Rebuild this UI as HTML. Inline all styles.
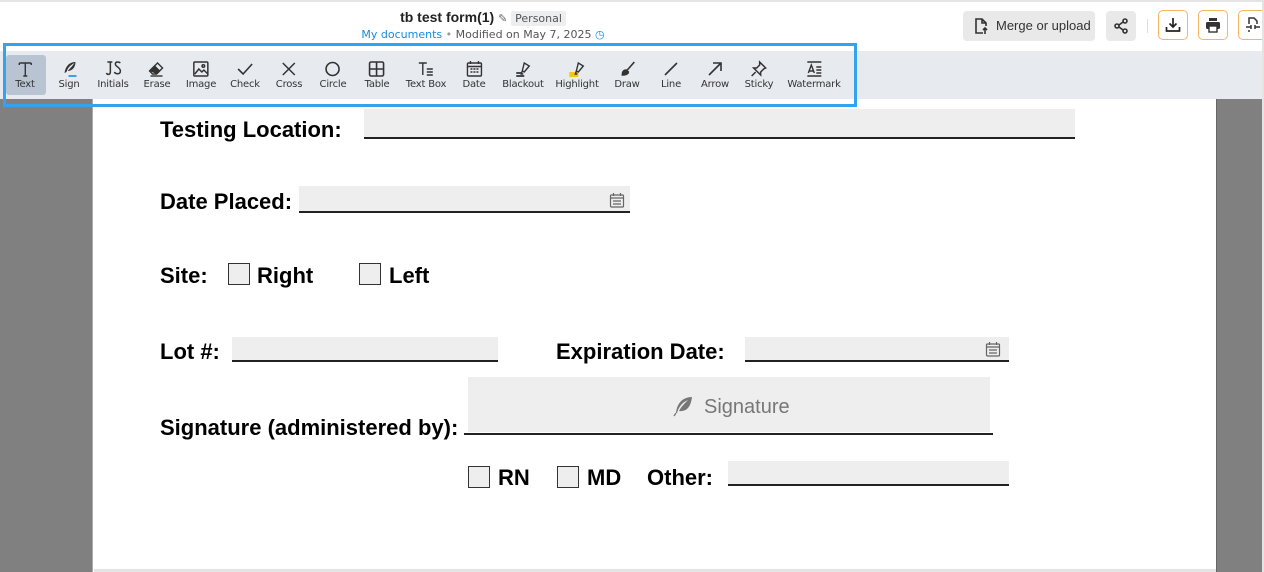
<!DOCTYPE html>
<html><head><meta charset="utf-8"><style>
*{margin:0;padding:0;box-sizing:border-box}
body{width:1264px;height:572px;overflow:hidden;background:#fff;font-family:"Liberation Sans",sans-serif;position:relative}
.a{position:absolute}
.top{left:0;top:0;width:1264px;height:2px;background:#e4e4e4}
.hdr{font-family:"DejaVu Sans","Liberation Sans",sans-serif}
.tb{left:0;top:51px;width:1262px;height:48px;background:#e7ebef}
.frame{left:3px;top:43px;width:854px;height:64px;border:3px solid #33a3f0}
.item{position:absolute;top:55px;height:40px;text-align:center;font-family:"DejaVu Sans",sans-serif;font-size:10px;color:#333;transform:translateX(-50%)}
.item svg{display:block;margin:5px auto 0;width:18px;height:18px}
.item span{display:block;margin-top:1px;white-space:nowrap;letter-spacing:-0.2px}
.gray{background:#808080}
.lbl{position:absolute;font-weight:bold;font-size:22px;line-height:22px;color:#000;white-space:nowrap}
.fld{position:absolute;background:#eeeeee;border-bottom:2px solid #222}
.cb{position:absolute;width:22px;height:22px;background:#eee;border:1.5px solid #333}
.btn{position:absolute;border:1px solid #f5b563;border-radius:5px;width:30px;height:30px;top:10px;background:#fff}
</style></head><body>
<div class="a top"></div>
<div class="a" style="left:0;top:9px;width:966px;text-align:center;font-size:14px;font-weight:bold;color:#222">tb test form(1) <span style="font-weight:normal;color:#666;font-size:11px">✎</span> <span class="hdr" style="font-weight:normal;background:#eceef0;color:#555;font-size:11px;padding:1px 4px;border-radius:2px">Personal</span></div>
<div class="a hdr" style="left:0;top:28px;width:966px;text-align:center;font-size:11px;color:#555"><span style="color:#1a8ad9">My documents</span> <span style="color:#999">•</span> Modified on May 7, 2025 <span style="color:#1a8ad9">◷</span></div>
<div class="a" style="left:963px;top:11px;width:132px;height:30px;background:#e9e9e9;border-radius:4px;font-size:13px;color:#333;line-height:30px;padding-left:33px">Merge or upload</div>
<svg class="a" style="left:974px;top:17px" width="16" height="18" viewBox="0 0 16 18" fill="none" stroke="#333" stroke-width="1.6"><path d="M9 16H2V2h6l4 4v3M8 2v4h4M11 17v-6M9 13l2-2 2 2"/></svg>
<div class="a" style="left:1106px;top:11px;width:30px;height:30px;background:#e9e9e9;border-radius:4px"></div>
<svg class="a" style="left:1113px;top:18px" width="16" height="16" viewBox="0 0 16 16" fill="none" stroke="#333" stroke-width="1.6"><circle cx="12" cy="3" r="2"/><circle cx="12" cy="13" r="2"/><circle cx="4" cy="8" r="2"/><path d="M6 7l4-3M6 9l4 3"/></svg>
<div class="a" style="left:1147px;top:19px;width:1px;height:14px;background:#ddd"></div>
<div class="btn" style="left:1158px"></div>
<svg class="a" style="left:1165px;top:17px" width="16" height="16" viewBox="0 0 16 16" fill="none" stroke="#222" stroke-width="1.7"><path d="M8 1v9M4.5 6.5L8 10l3.5-3.5M1.5 10v4h13v-4"/></svg>
<div class="btn" style="left:1198px"></div>
<svg class="a" style="left:1205px;top:17px" width="16" height="16" viewBox="0 0 16 16"><rect x="4" y="1" width="8" height="3" fill="#333"/><rect x="1" y="5" width="14" height="7" rx="1.5" fill="#333"/><rect x="4" y="9" width="8" height="6" fill="#fff" stroke="#333" stroke-width="1.4"/></svg>
<div class="btn" style="left:1238px;width:40px"></div>
<svg class="a" style="left:1245px;top:17px" width="16" height="16" viewBox="0 0 16 16" fill="none" stroke="#333" stroke-width="1.5"><path d="M4 7V1h5l3 3v3M1 10h5M10 10h5M6 8v4M10 8v4M4 13v2"/></svg>
<div class="a" style="left:1262px;top:0;width:2px;height:572px;background:#e4e4e4"></div>

<div class="a tb"></div>
<div class="a gray" style="left:0;top:99px;width:93px;height:473px;border-right:1px solid #aaa"></div>
<div class="a gray" style="left:1216px;top:99px;width:46px;height:473px;border-left:1px solid #666"></div>
<div class="a" style="left:94px;top:569px;width:1122px;height:3px;background:#e4e4e4"></div>
<div class="a" style="left:6px;top:55px;width:40px;height:40px;background:#b9c4d3;border-radius:3px"></div>

<div class="item" style="left:25px"><svg viewBox="0 0 18 18" fill="none" stroke="#333" stroke-width="1.4"><path d="M3 3h12M9 3v13M3 3v2M15 3v2M7 16h4"/></svg><span>Text</span></div>
<div class="item" style="left:69px"><svg viewBox="0 0 18 18"><path d="M15 2C9 2 5 6 4 13l2-1c1-4 4-7 8-9-2 3-5 6-7 8 5 0 8-4 8-9z" fill="#333"/><path d="M8 16h8" stroke="#1a8ad9" stroke-width="1.6"/></svg><span>Sign</span></div>
<div class="item" style="left:113px"><svg viewBox="0 0 18 18" fill="none" stroke="#333" stroke-width="1.5"><path d="M3 2h5M6 2v10c0 3-3 3-4 1M16 3c-1-1-5-2-5 1s5 3 5 7-5 3-6 1"/></svg><span>Initials</span></div>
<div class="item" style="left:157px"><svg viewBox="0 0 18 18" fill="none" stroke="#333" stroke-width="1.4"><path d="M10 3l5 5-6 6H5l-3-3z" /><path d="M2 11l5-5 5 5-3 3" fill="#333"/><path d="M3 16h12"/></svg><span>Erase</span></div>
<div class="item" style="left:201px"><svg viewBox="0 0 18 18" fill="none" stroke="#333" stroke-width="1.5"><rect x="2" y="2" width="14" height="14" rx="1"/><circle cx="11.5" cy="6" r="1.3"/><path d="M3 14l4-5 3 3 2-2 4 4"/></svg><span>Image</span></div>
<div class="item" style="left:245px"><svg viewBox="0 0 18 18" fill="none" stroke="#333" stroke-width="1.6"><path d="M2 9l5 5 9-10"/></svg><span>Check</span></div>
<div class="item" style="left:289px"><svg viewBox="0 0 18 18" fill="none" stroke="#333" stroke-width="1.5"><path d="M3 3l12 12M15 3L3 15"/></svg><span>Cross</span></div>
<div class="item" style="left:333px"><svg viewBox="0 0 18 18" fill="none" stroke="#333" stroke-width="1.6"><circle cx="9" cy="9" r="6.5"/></svg><span>Circle</span></div>
<div class="item" style="left:377px"><svg viewBox="0 0 18 18" fill="none" stroke="#333" stroke-width="1.6"><rect x="2" y="2" width="14" height="14" rx="1.5"/><path d="M9 2v14M2 9h14"/></svg><span>Table</span></div>
<div class="item" style="left:426px"><svg viewBox="0 0 18 18" fill="none" stroke="#333" stroke-width="1.4"><path d="M2 3h8M6 3v12M10 9h6M10 12h6M10 15h6"/></svg><span>Text Box</span></div>
<div class="item" style="left:474px"><svg viewBox="0 0 18 18" fill="none" stroke="#333" stroke-width="1.4"><rect x="2" y="3" width="14" height="13" rx="1"/><path d="M2 6.5h14M5 1v3M13 1v3"/><path d="M5 9h2M8 9h2M11 9h2M5 12h2M8 12h2M11 12h2" stroke-width="1.6"/></svg><span>Date</span></div>
<div class="item" style="left:523px"><svg viewBox="0 0 18 18" fill="none" stroke="#333" stroke-width="1.4"><path d="M8 11l2-8 5 3-5 6zM8 11l-1 3h2"/><path d="M2 13h6M2 16h8" stroke-width="1.8"/></svg><span>Blackout</span></div>
<div class="item" style="left:577px"><svg viewBox="0 0 18 18"><rect x="1" y="12" width="9" height="5" fill="#f5c518"/><path d="M8 11l2-8 5 3-5 6zM8 11l-1 3h2" fill="none" stroke="#333" stroke-width="1.4"/></svg><span>Highlight</span></div>
<div class="item" style="left:627px"><svg viewBox="0 0 18 18" fill="none" stroke="#333" stroke-width="1.6"><path d="M16 2L9 10"/><path d="M8 10c-3 0-4 2-4 5 3 0 6-1 6-3z" fill="#333"/></svg><span>Draw</span></div>
<div class="item" style="left:671px"><svg viewBox="0 0 18 18" fill="none" stroke="#333" stroke-width="1.6"><path d="M3 15L15 3"/></svg><span>Line</span></div>
<div class="item" style="left:715px"><svg viewBox="0 0 18 18" fill="none" stroke="#333" stroke-width="1.6"><path d="M3 15L15 3M7 3h8v8"/></svg><span>Arrow</span></div>
<div class="item" style="left:759px"><svg viewBox="0 0 18 18" fill="none" stroke="#333" stroke-width="1.5"><path d="M10 2l6 6-2 1-3 3 0 3-7-7 3 0 3-3z M6 12l-4 4"/></svg><span>Sticky</span></div>
<div class="item" style="left:814px"><svg viewBox="0 0 18 18" fill="none" stroke="#333" stroke-width="1.4"><path d="M2 2h14M2 16h14M3 13l3-8 3 8M4 11h4M11 7h5M11 10h5M11 13h5"/></svg><span>Watermark</span></div>
<div class="a frame"></div>

<div class="lbl" style="left:160px;top:119px">Testing Location:</div>
<div class="fld" style="left:364px;top:109px;width:711px;height:30px"></div>
<div class="lbl" style="left:160px;top:191px">Date Placed:</div>
<div class="fld" style="left:299px;top:186px;width:331px;height:27px"></div>
<svg class="a" style="left:609px;top:192px" width="16" height="16" viewBox="0 0 16 16" fill="none" stroke="#666" stroke-width="1.2"><rect x="1.5" y="3" width="13" height="12" rx="1"/><path d="M1.5 6h13M4.5 1v3M11.5 1v3M4 9h8M4 12h8" /></svg>
<div class="lbl" style="left:160px;top:265px">Site:</div>
<div class="cb" style="left:228px;top:263px"></div>
<div class="lbl" style="left:257px;top:265px">Right</div>
<div class="cb" style="left:359px;top:263px"></div>
<div class="lbl" style="left:389px;top:265px">Left</div>
<div class="lbl" style="left:160px;top:341px">Lot #:</div>
<div class="fld" style="left:232px;top:337px;width:266px;height:25px"></div>
<div class="lbl" style="left:556px;top:341px">Expiration Date:</div>
<div class="fld" style="left:745px;top:337px;width:264px;height:25px"></div>
<svg class="a" style="left:985px;top:341px" width="16" height="16" viewBox="0 0 16 16" fill="none" stroke="#666" stroke-width="1.2"><rect x="1.5" y="3" width="13" height="12" rx="1"/><path d="M1.5 6h13M4.5 1v3M11.5 1v3M4 9h8M4 12h8" /></svg>
<div class="lbl" style="left:160px;top:417px">Signature (administered by):</div>
<div class="a" style="left:468px;top:377px;width:522px;height:55px;background:#eeeeee"></div>
<div class="a" style="left:464px;top:433px;width:529px;height:2px;background:#222"></div>
<svg class="a" style="left:672px;top:395px" width="22" height="22" viewBox="0 0 22 22"><path d="M20 2C11 2 5 8 4 18l1 0c2-7 6-11 11-13-3 3-7 7-9 11 9 1 12-6 13-14z" fill="#777"/><path d="M4 18L2 21" stroke="#777" stroke-width="1.3"/></svg>
<div class="a" style="left:704px;top:397px;font-size:20px;color:#777;line-height:20px">Signature</div>
<div class="cb" style="left:468px;top:466px"></div>
<div class="lbl" style="left:498px;top:467px">RN</div>
<div class="cb" style="left:557px;top:466px"></div>
<div class="lbl" style="left:587px;top:467px">MD</div>
<div class="lbl" style="left:647px;top:467px">Other:</div>
<div class="fld" style="left:728px;top:461px;width:281px;height:25px"></div>
</body></html>
